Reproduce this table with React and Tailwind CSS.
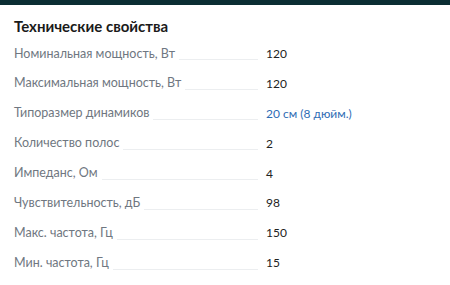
import React from 'react';

const specs = [
    { label: 'Номинальная мощность, Вт', value: '120' },
    { label: 'Максимальная мощность, Вт', value: '120' },
    { label: 'Типоразмер динамиков', value: '20 см (8 дюйм.)', link: true },
    { label: 'Количество полос', value: '2' },
    { label: 'Импеданс, Ом', value: '4' },
    { label: 'Чувствительность, дБ', value: '98' },
    { label: 'Макс. частота, Гц', value: '150' },
    { label: 'Мин. частота, Гц', value: '15' },
];

const App = () => {
    return (
        <div className="w-[450px] h-[285px] bg-white overflow-hidden" style={{ fontFamily: 'Lato, "Open Sans", sans-serif' }}>
            <div className="h-[5px] bg-[#0b2e33]" />
            <div className="pl-[14px]">
                <h2 className="pt-[11px] h-[34px] text-[15px] leading-[20px] font-bold text-[#1a1a1a]">
                    Технические свойства
                </h2>
                {specs.map((s) => (
                    <div key={s.label} className="flex items-center h-[29.9px]">
                        <div className="flex items-end w-[244px]">
                            <span className="text-[12.5px] text-[#6f7781] whitespace-nowrap">{s.label}</span>
                            <span className="flex-1 ml-[4px] mb-[3px] border-b border-[#eceef0]" />
                        </div>
                        <span className={`ml-[8px] text-[12px] ${s.link ? 'text-[#2f6db5]' : 'text-[#222]'}`}>
                            {s.value}
                        </span>
                    </div>
                ))}
            </div>
        </div>
    );
};

export default App;
